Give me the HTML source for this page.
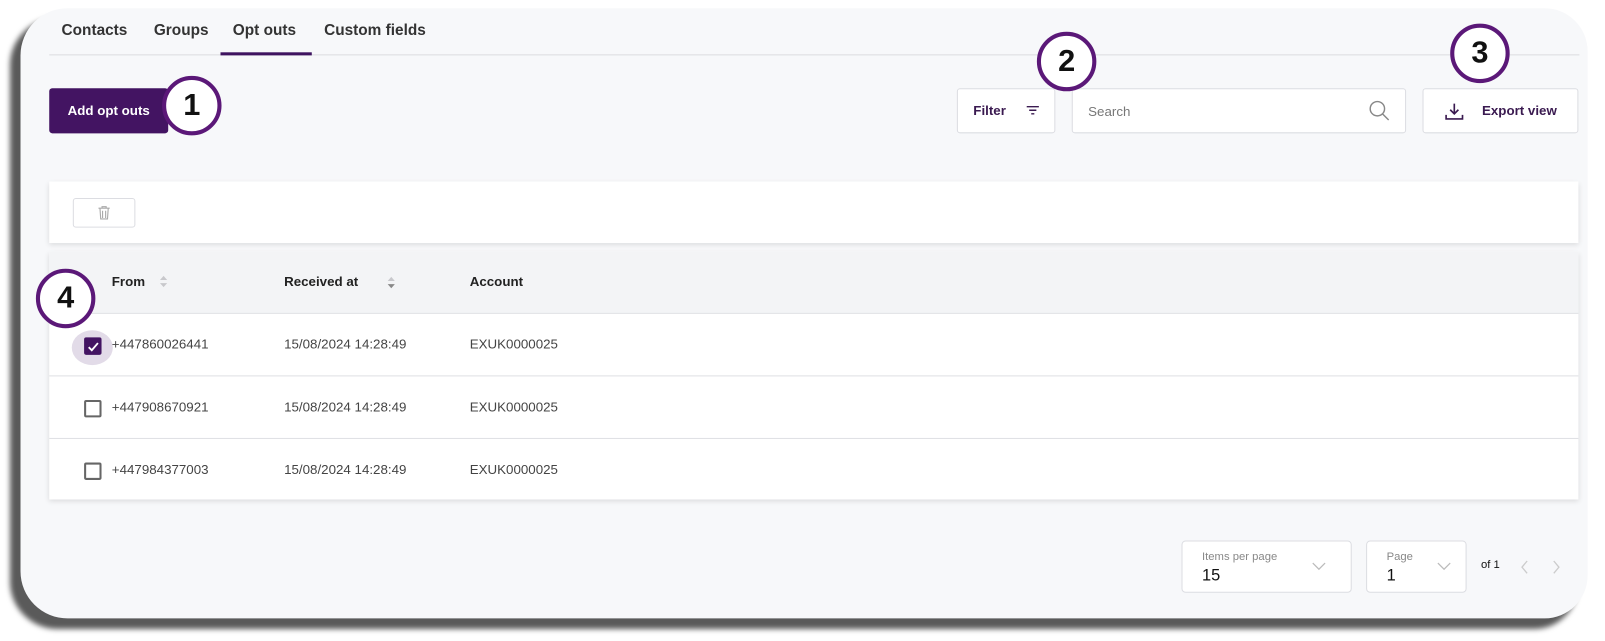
<!DOCTYPE html>
<html><head><meta charset="utf-8"><style>
*{box-sizing:border-box;margin:0;padding:0}
body{width:1605px;height:641px;background:#fff;font-family:"Liberation Sans",sans-serif;position:relative;overflow:hidden;color:#333}
#w{position:absolute;left:0;top:0;width:1565px;height:625px;transform:scale(1.0256);transform-origin:0 0}
.panel{position:absolute;left:20px;top:8px;width:1528px;height:595px;background:#f7f8fa;border-radius:46px 42px 42px 46px;box-shadow:-10px 10px 5px #5a5a5a}
.a{position:absolute}
.tab{position:absolute;top:21px;font-weight:bold;font-size:15px;color:#333}
.btn{position:absolute;background:#fff;border:1px solid #dcdde2;border-radius:3px}
.circ{position:absolute;width:58px;height:58px;border:4px solid #5b1878;border-radius:50%;background:#fff;font-size:30px;font-weight:bold;text-align:center;line-height:50px;color:#111;font-family:"Liberation Sans",sans-serif}
.card{position:absolute;left:48px;width:1491px;background:#fff;box-shadow:0 2px 5px rgba(0,0,0,.12)}
.row{position:absolute;left:0;width:1491px;height:61px;border-top:1px solid #dfe0e4;font-size:13px;color:#444}
.row span{position:absolute;top:22px}
.cb{position:absolute;left:34px;top:23px;width:17px;height:17px;border:2px solid #666;border-radius:2px}
</style></head><body><div id="w">
<div class="panel"></div>
<div class="tab" style="left:60px">Contacts</div>
<div class="tab" style="left:150px">Groups</div>
<div class="tab" style="left:227px">Opt outs</div>
<div class="tab" style="left:316px">Custom fields</div>
<div class="a" style="left:48px;top:53px;width:1492px;height:1px;background:#dcdde0"></div>
<div class="a" style="left:215px;top:51px;width:89px;height:3px;background:#3f1460"></div>

<div class="a" style="left:48px;top:86px;width:116px;height:44px;background:#431462;border-radius:3px;color:#fff;font-weight:bold;font-size:13px;line-height:44px;text-align:center">Add opt outs</div>
<div class="circ" style="left:158px;top:74px">1</div>

<div class="btn" style="left:933px;top:86px;width:96px;height:44px;font-weight:bold;font-size:13px;color:#3a1a50;line-height:42px;padding-left:15px">Filter
<svg class="a" style="left:67px;top:16px" width="12" height="10" viewBox="0 0 12 10"><path d="M0 1h12M2.5 4.5h7M4.5 8h3" stroke="#3a1a50" stroke-width="1.4"/></svg></div>
<div class="btn" style="left:1045px;top:86px;width:326px;height:44px;font-size:13px;color:#777;line-height:44px;padding-left:15px">Search
<svg class="a" style="left:288px;top:10px" width="22" height="22" viewBox="0 0 22 22"><circle cx="9" cy="9" r="7" fill="none" stroke="#888" stroke-width="1.4"/><path d="M14 14l6 6" stroke="#888" stroke-width="1.4"/></svg></div>
<div class="btn" style="left:1387px;top:86px;width:152px;height:44px;font-weight:bold;font-size:13px;color:#3a1a50;line-height:42px;padding-left:57px">Export view
<svg class="a" style="left:20px;top:12px" width="20" height="20" viewBox="0 0 20 20"><path d="M10 2v10M6 8l4 4 4-4M2 13v4h16v-4" fill="none" stroke="#3a1a50" stroke-width="1.6"/></svg></div>
<div class="circ" style="left:1011px;top:31px">2</div>
<div class="circ" style="left:1414px;top:23px">3</div>

<div class="card" style="top:177px;height:60px">
<div class="btn" style="left:23px;top:16px;width:61px;height:29px">
<svg class="a" style="left:23px;top:6px" width="13" height="15" viewBox="0 0 13 15"><path d="M1 3h11M4.5 3V1.5h4V3M2.5 3.5l.7 10h6.6l.7-10M5 5.5v7M8 5.5v7" fill="none" stroke="#aaa" stroke-width="1.1"/></svg></div>
</div>

<div class="card" style="top:245px;height:242px">
<div class="a" style="left:0;top:0;width:1491px;height:60px;background:#f3f4f6;font-weight:bold;font-size:13px;color:#222">
<span class="a" style="left:61px;top:22px">From</span>
<svg class="a" style="left:107px;top:23px" width="9" height="13" viewBox="0 0 9 13"><path d="M1 5l3.5-4 3.5 4zM1 8l3.5 4 3.5-4z" fill="#c8c8cc"/></svg>
<span class="a" style="left:229px;top:22px">Received at</span>
<svg class="a" style="left:329px;top:24px" width="9" height="13" viewBox="0 0 9 13"><path d="M1 5l3.5-4 3.5 4z" fill="#c8c8cc"/><path d="M1 8l3.5 4 3.5-4z" fill="#888"/></svg>
<span class="a" style="left:410px;top:22px">Account</span>
</div>
<div class="row" style="top:60px">
<div class="a" style="left:22px;top:16px;width:40px;height:34px;border-radius:50%;background:#e2dbe8"></div>
<div class="cb" style="background:#431462;border-color:#431462"><svg class="a" style="left:1px;top:1px" width="12" height="12" viewBox="0 0 12 12"><path d="M1.5 6.5l3 3 6-7" fill="none" stroke="#fff" stroke-width="1.8"/></svg></div>
<span style="left:61px">+447860026441</span><span style="left:229px">15/08/2024 14:28:49</span><span style="left:410px">EXUK0000025</span></div>
<div class="row" style="top:121px"><div class="cb"></div><span style="left:61px">+447908670921</span><span style="left:229px">15/08/2024 14:28:49</span><span style="left:410px">EXUK0000025</span></div>
<div class="row" style="top:182px"><div class="cb"></div><span style="left:61px">+447984377003</span><span style="left:229px">15/08/2024 14:28:49</span><span style="left:410px">EXUK0000025</span></div>
</div>
<div class="circ" style="left:35px;top:262px">4</div>

<div class="btn" style="left:1152px;top:527px;width:166px;height:51px;border-radius:4px">
<div class="a" style="left:19px;top:9px;font-size:11px;color:#888">Items per page</div>
<div class="a" style="left:19px;top:25px;font-size:16px;color:#111">15</div>
<svg class="a" style="left:126px;top:20px" width="14" height="8" viewBox="0 0 14 8"><path d="M1 1l6 6 6-6" fill="none" stroke="#bbb" stroke-width="1.2"/></svg></div>
<div class="btn" style="left:1332px;top:527px;width:98px;height:51px;border-radius:4px">
<div class="a" style="left:19px;top:9px;font-size:11px;color:#888">Page</div>
<div class="a" style="left:19px;top:25px;font-size:16px;color:#111">1</div>
<svg class="a" style="left:68px;top:20px" width="14" height="8" viewBox="0 0 14 8"><path d="M1 1l6 6 6-6" fill="none" stroke="#bbb" stroke-width="1.2"/></svg></div>
<div class="a" style="left:1444px;top:545px;font-size:11px;color:#111">of 1</div>
<svg class="a" style="left:1482px;top:546px" width="40" height="14" viewBox="0 0 40 14"><path d="M7 1l-5 6 5 6M33 1l5 6-5 6" fill="none" stroke="#ccc" stroke-width="1.3"/></svg>
</div></body></html>
